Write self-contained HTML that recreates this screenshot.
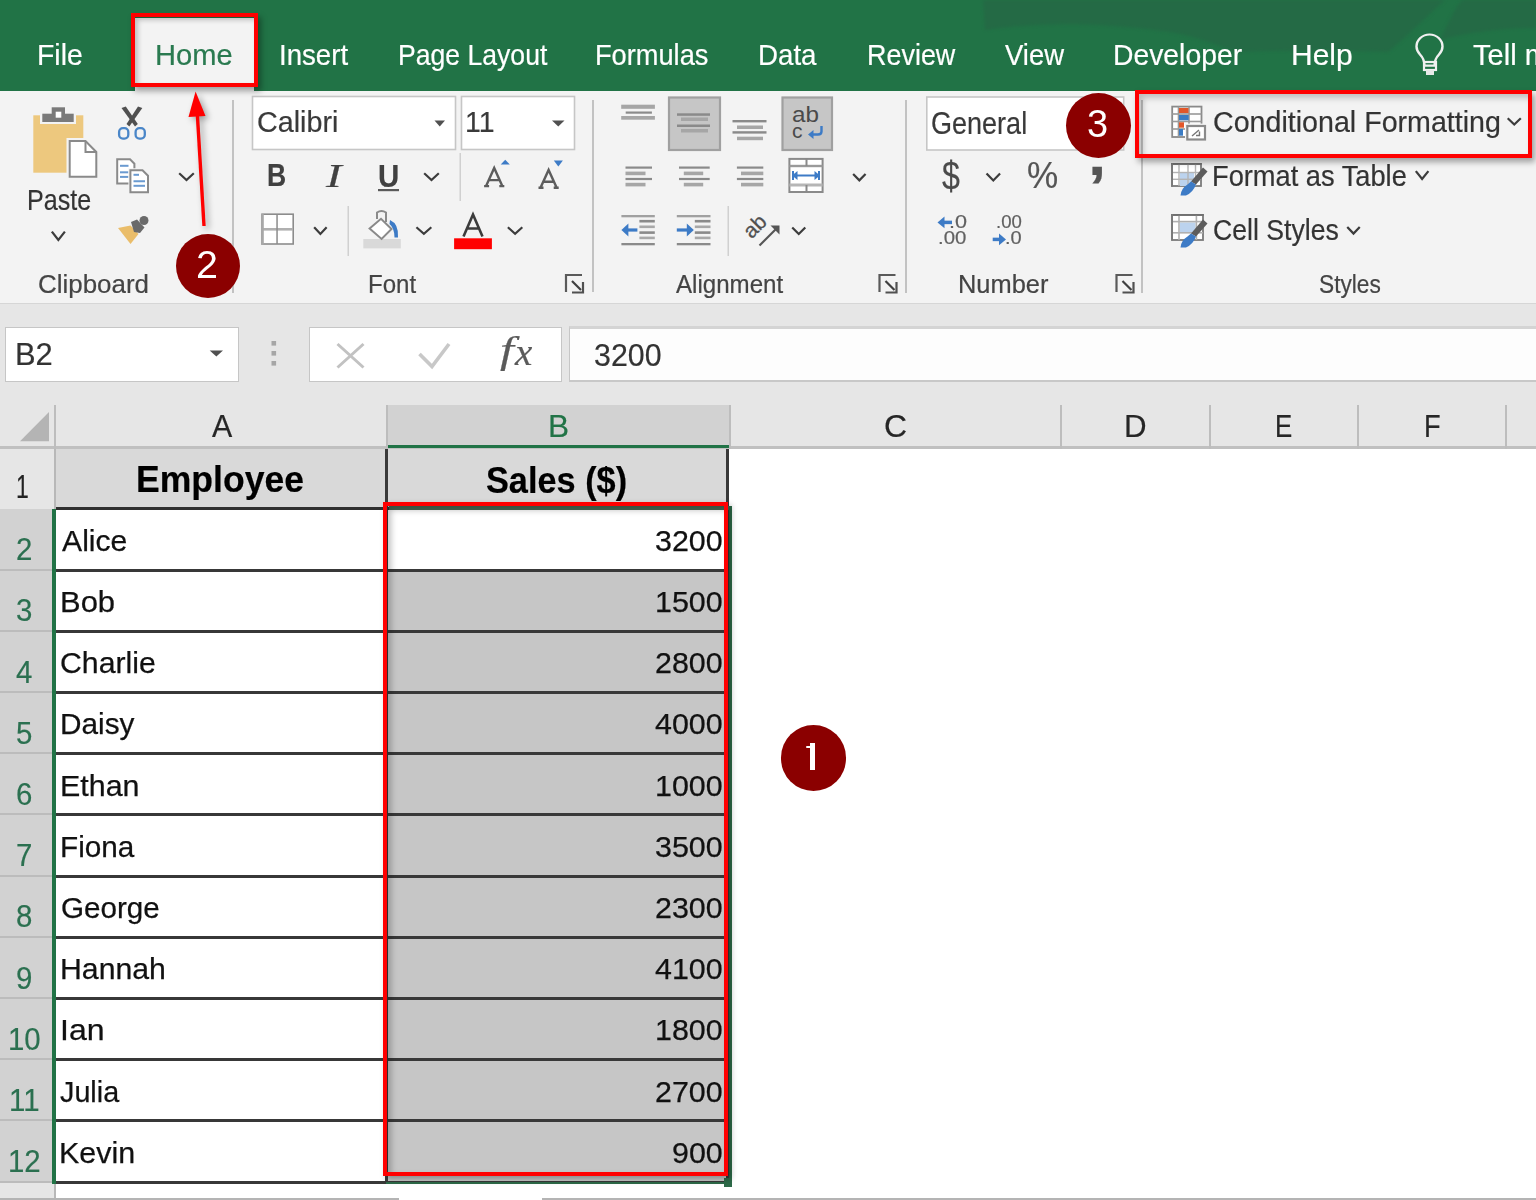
<!DOCTYPE html>
<html><head><meta charset="utf-8"><style>
html,body{margin:0;padding:0;}
body{width:1536px;height:1200px;overflow:hidden;position:relative;background:#fff;font-family:"Liberation Sans",sans-serif;}
.a{position:absolute;box-sizing:border-box;}
.t{position:absolute;white-space:nowrap;transform-origin:0 0;}
svg{position:absolute;left:0;top:0;}
</style></head><body>
<div class="a" style="left:0px;top:0px;width:1536px;height:91px;background:#217346;"></div>
<svg width="1536" height="91" style="filter:blur(1.5px)"><path d="M983,0 H1445 C1425,18 1405,38 1388,52 C1340,50 1290,50 1236,52 C1215,44 1195,36 1170,32 C1100,22 1040,22 985,30 Z" fill="#246a45"/><path d="M1462,0 H1536 V28 C1500,28 1465,33 1440,40 C1448,25 1452,12 1462,0 Z" fill="#246a45"/></svg>
<div class="a" style="left:0px;top:91px;width:1536px;height:212px;background:#f3f3f3;"></div>
<div class="a" style="left:0px;top:302.5px;width:1536px;height:2.0px;background:#d6d6d6;"></div>
<div class="a" style="left:0px;top:304px;width:1536px;height:100px;background:#e6e6e6;"></div>
<div class="a" style="left:5px;top:327px;width:234px;height:55px;background:#fff;border:1px solid #c6c6c6;"></div>
<div class="a" style="left:309px;top:327px;width:253px;height:55px;background:#fff;border:1px solid #c6c6c6;"></div>
<div class="a" style="left:569px;top:326px;width:967px;height:56px;background:#fdfdfd;border-top:3px solid #d4d4d4;border-bottom:2px solid #c8c8c8;border-left:1px solid #c6c6c6;"></div>
<div class="a" style="left:135px;top:18px;width:119px;height:73px;background:#f3f3f3;"></div>
<div class="a" style="left:0px;top:404px;width:1536px;height:45px;background:#e6e6e6;"></div>
<div class="a" style="left:386px;top:405px;width:343px;height:42px;background:#d2d2d2;"></div>
<div class="a" style="left:0px;top:446px;width:1536px;height:3px;background:#c0c0c0;"></div>
<div class="a" style="left:386px;top:445px;width:343px;height:3px;background:#217346;"></div>
<div class="a" style="left:54px;top:405px;width:2px;height:44px;background:#bdbdbd;"></div>
<div class="a" style="left:386px;top:405px;width:2px;height:44px;background:#bdbdbd;"></div>
<div class="a" style="left:729px;top:405px;width:2px;height:44px;background:#bdbdbd;"></div>
<div class="a" style="left:1060px;top:405px;width:2px;height:44px;background:#bdbdbd;"></div>
<div class="a" style="left:1209px;top:405px;width:2px;height:44px;background:#bdbdbd;"></div>
<div class="a" style="left:1357px;top:405px;width:2px;height:44px;background:#bdbdbd;"></div>
<div class="a" style="left:1505px;top:405px;width:2px;height:44px;background:#bdbdbd;"></div>
<div class="a" style="left:0px;top:449px;width:54px;height:60px;background:#e6e6e6;"></div>
<div class="a" style="left:0px;top:509px;width:52px;height:673px;background:#d2d2d2;"></div>
<div class="a" style="left:0px;top:1182px;width:54px;height:18px;background:#e6e6e6;"></div>
<div class="a" style="left:54px;top:449px;width:2px;height:751px;background:#b8b8b8;"></div>
<div class="a" style="left:0px;top:569px;width:52px;height:2px;background:#bcbcbc;"></div>
<div class="a" style="left:0px;top:630px;width:52px;height:2px;background:#bcbcbc;"></div>
<div class="a" style="left:0px;top:691px;width:52px;height:2px;background:#bcbcbc;"></div>
<div class="a" style="left:0px;top:752px;width:52px;height:2px;background:#bcbcbc;"></div>
<div class="a" style="left:0px;top:813px;width:52px;height:2px;background:#bcbcbc;"></div>
<div class="a" style="left:0px;top:875px;width:52px;height:2px;background:#bcbcbc;"></div>
<div class="a" style="left:0px;top:936px;width:52px;height:2px;background:#bcbcbc;"></div>
<div class="a" style="left:0px;top:997px;width:52px;height:2px;background:#bcbcbc;"></div>
<div class="a" style="left:0px;top:1058px;width:52px;height:2px;background:#bcbcbc;"></div>
<div class="a" style="left:0px;top:1119px;width:52px;height:2px;background:#bcbcbc;"></div>
<div class="a" style="left:0px;top:1181px;width:52px;height:2px;background:#bcbcbc;"></div>
<div class="a" style="left:52px;top:509px;width:4px;height:675px;background:#217346;"></div>
<div class="a" style="left:0px;top:1198px;width:399px;height:2px;background:#b4b4b4;"></div>
<div class="a" style="left:542px;top:1198px;width:994px;height:2px;background:#b4b4b4;"></div>
<div class="a" style="left:56px;top:449px;width:330px;height:60px;background:#d9d9d9;"></div>
<div class="a" style="left:386px;top:449px;width:343px;height:60px;background:#d9d9d9;"></div>
<div class="a" style="left:56px;top:509px;width:330px;height:672px;background:#fff;"></div>
<div class="a" style="left:386px;top:509px;width:342px;height:62px;background:#fff;"></div>
<div class="a" style="left:386px;top:571px;width:342px;height:610px;background:#c6c6c6;"></div>
<div class="a" style="left:56px;top:507px;width:673px;height:3px;background:#303030;"></div>
<div class="a" style="left:56px;top:569px;width:672px;height:3px;background:#383838;"></div>
<div class="a" style="left:56px;top:630px;width:672px;height:3px;background:#383838;"></div>
<div class="a" style="left:56px;top:691px;width:672px;height:3px;background:#383838;"></div>
<div class="a" style="left:56px;top:752px;width:672px;height:3px;background:#383838;"></div>
<div class="a" style="left:56px;top:813px;width:672px;height:3px;background:#383838;"></div>
<div class="a" style="left:56px;top:875px;width:672px;height:3px;background:#383838;"></div>
<div class="a" style="left:56px;top:936px;width:672px;height:3px;background:#383838;"></div>
<div class="a" style="left:56px;top:997px;width:672px;height:3px;background:#383838;"></div>
<div class="a" style="left:56px;top:1058px;width:672px;height:3px;background:#383838;"></div>
<div class="a" style="left:56px;top:1119px;width:672px;height:3px;background:#383838;"></div>
<div class="a" style="left:56px;top:1181px;width:672px;height:3px;background:#383838;"></div>
<div class="a" style="left:385px;top:449px;width:3px;height:732px;background:#3a3a3a;"></div>
<div class="a" style="left:726px;top:449px;width:3px;height:732px;background:#383838;"></div>
<div class="a" style="left:729px;top:506px;width:2.7000000000000455px;height:678px;background:#2d6a48;"></div>
<div class="a" style="left:386px;top:1181.5px;width:345.70000000000005px;height:2.7000000000000455px;background:#2d6a48;"></div>
<div class="a" style="left:389px;top:505.5px;width:340px;height:4.5px;background:#4a6b56;"></div>
<div class="a" style="left:723.5px;top:1178px;width:8.5px;height:8.5px;background:#2d6a48;"></div>
<svg width="1536" height="1200"><rect x="232" y="100" width="2" height="193" fill="#c2c2c2" stroke="none" stroke-width="0" /><rect x="592" y="100" width="2" height="192" fill="#c2c2c2" stroke="none" stroke-width="0" /><rect x="905" y="100" width="2" height="193" fill="#c2c2c2" stroke="none" stroke-width="0" /><rect x="1141" y="100" width="2" height="193" fill="#c2c2c2" stroke="none" stroke-width="0" /><rect x="459.5" y="153" width="1.5" height="48" fill="#d0d0d0" stroke="none" stroke-width="0" /><rect x="347.5" y="206" width="1.5" height="50" fill="#d0d0d0" stroke="none" stroke-width="0" /><rect x="727.5" y="206" width="1.5" height="50" fill="#d0d0d0" stroke="none" stroke-width="0" /><path d="M566,292 V275 H582" fill="none" stroke="#5a5a5a" stroke-width="2.2"/><path d="M572,281 L581,290" stroke="#404040" stroke-width="2.2"/><path d="M572,292.5 H583 V282" fill="none" stroke="#505050" stroke-width="2.2"/><path d="M879.5,292 V275 H895.5" fill="none" stroke="#5a5a5a" stroke-width="2.2"/><path d="M885.5,281 L894.5,290" stroke="#404040" stroke-width="2.2"/><path d="M885.5,292.5 H896.5 V282" fill="none" stroke="#505050" stroke-width="2.2"/><path d="M1116.5,292 V275 H1132.5" fill="none" stroke="#5a5a5a" stroke-width="2.2"/><path d="M1122.5,281 L1131.5,290" stroke="#404040" stroke-width="2.2"/><path d="M1122.5,292.5 H1133.5 V282" fill="none" stroke="#505050" stroke-width="2.2"/><rect x="33.3" y="115.3" width="50.0" height="57.39999999999999" fill="#edc87e" stroke="none" stroke-width="0" /><path d="M40,112 H76 V124 H40 Z" fill="#f3f3f3"/><rect x="42.3" y="113.7" width="31.400000000000006" height="8.299999999999997" fill="#7a7a7a" stroke="none" stroke-width="0" /><rect x="51.7" y="107.3" width="13.299999999999997" height="6.700000000000003" fill="#7a7a7a" stroke="none" stroke-width="0" /><rect x="55.7" y="111.7" width="5.599999999999994" height="6.0" fill="#ffffff" stroke="none" stroke-width="0" /><path d="M66.5,138 H87 L99.5,150.5 V180 H66.5 Z" fill="#f3f3f3"/><path d="M69.7,141 H85.5 L96.3,152 V176.7 H69.7 Z" fill="#fff" stroke="#8a8a8a" stroke-width="2"/><path d="M85.5,141 V152 H96.3" fill="none" stroke="#8a8a8a" stroke-width="2"/><polyline points="52.5,232.5 58.35,240 64.2,232.5" fill="none" stroke="#3c3c3c" stroke-width="2.2" stroke-linecap="square"/><polygon points="121.5,108 125.8,106.5 137.8,124 135,126.5" fill="#505050"/><polygon points="138,106.5 142.3,108 129.3,126.5 126.5,124" fill="#505050"/><rect x="119.1" y="128.2" width="9.2" height="10.4" rx="3.8" fill="none" stroke="#4a86c8" stroke-width="2.3"/><rect x="135.6" y="128.2" width="9.2" height="10.4" rx="3.8" fill="none" stroke="#4a86c8" stroke-width="2.3"/><path d="M117.2,159.3 H130 L134.4,163.7 V183.6 H117.2 Z" fill="#fff" stroke="#8a8a8a" stroke-width="2"/><rect x="120" y="164.8" width="8.5" height="2.0" fill="#6a9ad0" stroke="none" stroke-width="0" /><rect x="120" y="171.3" width="8.5" height="2.0" fill="#6a9ad0" stroke="none" stroke-width="0" /><rect x="120" y="175.9" width="8.5" height="2.0" fill="#6a9ad0" stroke="none" stroke-width="0" /><path d="M128.4,168.2 H143 L148,173.2 V192.3 H128.4 Z" fill="#f3f3f3"/><path d="M130.4,170.2 H142.5 L148,175.7 V192.3 H130.4 Z" fill="#fff" stroke="#8a8a8a" stroke-width="2"/><rect x="133.5" y="173.8" width="5.5" height="2.0" fill="#6a9ad0" stroke="none" stroke-width="0" /><rect x="133.5" y="180.25" width="11.5" height="2.0" fill="#6a9ad0" stroke="none" stroke-width="0" /><rect x="133.5" y="184.8" width="11.5" height="2.0" fill="#6a9ad0" stroke="none" stroke-width="0" /><polyline points="180,174 186.5,180 193,174" fill="none" stroke="#3c3c3c" stroke-width="2.2" stroke-linecap="square"/><polygon points="118,228 130.5,225.5 138.5,234 130.5,244" fill="#eabd6a"/><polygon points="131,222 137,219.5 144.5,227.5 140,233 134,232" fill="#6a6a6a"/><circle cx="144" cy="220.5" r="4.5" fill="#6a6a6a"/><rect x="252.5" y="96.5" width="203.0" height="53.0" fill="#fff" stroke="#c6c6c6" stroke-width="1.6" /><rect x="461.5" y="96.5" width="113.0" height="53.0" fill="#fff" stroke="#c6c6c6" stroke-width="1.6" /><polygon points="434.5,120.5 445,120.5 439.75,126.5" fill="#505050"/><polygon points="552,120.5 564.5,120.5 558.25,126.5" fill="#505050"/><polygon points="209.7,350.5 223,350.5 216.35,356.5" fill="#505050"/><polyline points="425,174 431.5,180 438,174" fill="none" stroke="#3c3c3c" stroke-width="2.2" stroke-linecap="square"/><polyline points="314.9,228 320.4,233.9 325.9,228" fill="none" stroke="#3c3c3c" stroke-width="2.2" stroke-linecap="square"/><polyline points="417.25,228 423.875,233.8 430.5,228" fill="none" stroke="#3c3c3c" stroke-width="2.2" stroke-linecap="square"/><polyline points="508.7,228 515.1,233.8 521.5,228" fill="none" stroke="#3c3c3c" stroke-width="2.2" stroke-linecap="square"/><rect x="378" y="189" width="21" height="2.1999999999999886" fill="#5a5a5a" stroke="none" stroke-width="0" /><path d="M486.1,186.1 L494.20000000000005,168 L502.3,186.1 M489.6,180.1 H498.8 M484.1,186.1 H489.1 M499.3,186.1 H504.3" fill="none" stroke="#5c5c5c" stroke-width="2.4"/><polygon points="500.7,164.6 509.8,164.6 505.25,159.8" fill="#3d7bc6"/><path d="M540.5,187.7 L548.6,169.9 L556.7,187.7 M544.0,181.7 H553.2 M538.5,187.7 H543.5 M553.7,187.7 H558.7" fill="none" stroke="#5c5c5c" stroke-width="2.4"/><polygon points="553.8,160.4 562.9,160.4 558.35,166.6" fill="#3d7bc6"/><rect x="262" y="214.2" width="31.19999999999999" height="29.80000000000001" fill="#fff" stroke="#8c8c8c" stroke-width="1.6" /><rect x="262.5" y="228" width="30.5" height="2.5999999999999943" fill="#b0b0b0" stroke="none" stroke-width="0" /><rect x="276.3" y="214.2" width="1.5" height="29.80000000000001" fill="#8c8c8c" stroke="none" stroke-width="0" /><rect x="261.3" y="214" width="2.5" height="30.80000000000001" fill="#a8a8a8" stroke="none" stroke-width="0" /><rect x="363.3" y="239" width="37.5" height="9.400000000000006" fill="#d9d9d9" stroke="none" stroke-width="0" /><path d="M369.6,228.6 L381.6,239 L391.5,229 L381,218.75 Z" fill="#fff" stroke="#8a8a8a" stroke-width="2"/><path d="M377,219 V212.5 Q381.5,209.5 386,212.5 V222" fill="none" stroke="#8a8a8a" stroke-width="2"/><path d="M390,220 Q399,224 398,237.5 L394.5,237.5 Q394.5,228 389.5,224 Z" fill="#3d7bc6"/><path d="M463.5,236.5 L473,214.5 L482.5,236.5 M467,228.5 H479" fill="none" stroke="#3c3c3c" stroke-width="2.6"/><rect x="454.1" y="238.3" width="37.799999999999955" height="10.899999999999977" fill="#ff0000" stroke="none" stroke-width="0" /><rect x="621.2" y="104.7" width="33.69999999999993" height="4.099999999999994" fill="#a6a6a6" stroke="none" stroke-width="0" /><rect x="625.7" y="111.5" width="26.199999999999932" height="2.200000000000003" fill="#8a8a8a" stroke="none" stroke-width="0" /><rect x="621.2" y="116" width="33.69999999999993" height="3.700000000000003" fill="#a6a6a6" stroke="none" stroke-width="0" /><rect x="669" y="97.5" width="51" height="52.5" fill="#c6c6c6" stroke="#a0a0a0" stroke-width="2.2" /><rect x="677" y="113.3" width="33" height="2.5" fill="#8a8a8a" stroke="none" stroke-width="0" /><rect x="681" y="117.5" width="27" height="3.5" fill="#a6a6a6" stroke="none" stroke-width="0" /><rect x="677" y="124.5" width="33" height="2.5" fill="#8a8a8a" stroke="none" stroke-width="0" /><rect x="681" y="129" width="27" height="3.5" fill="#a6a6a6" stroke="none" stroke-width="0" /><rect x="732.5" y="120" width="34.0" height="2.4000000000000057" fill="#8a8a8a" stroke="none" stroke-width="0" /><rect x="737" y="125.5" width="26" height="3.5" fill="#a6a6a6" stroke="none" stroke-width="0" /><rect x="732.5" y="131.2" width="34.0" height="2.4000000000000057" fill="#8a8a8a" stroke="none" stroke-width="0" /><rect x="737" y="136.7" width="26" height="3.5" fill="#a6a6a6" stroke="none" stroke-width="0" /><rect x="782.5" y="97.5" width="49.5" height="52.5" fill="#c6c6c6" stroke="#a0a0a0" stroke-width="2.2" /><text x="792" y="122" font-family="Liberation Sans" font-size="22" fill="#4a4a4a" textLength="27" lengthAdjust="spacingAndGlyphs">ab</text><text x="792" y="137.7" font-family="Liberation Sans" font-size="21" fill="#4a4a4a">c</text><path d="M821.5,126 V131.5 Q821.5,134.5 818,134.5 H810" fill="none" stroke="#3d7bc6" stroke-width="2.4"/><polygon points="808,134.5 813.5,130 813.5,139" fill="#3d7bc6"/><rect x="625.5" y="166.5" width="26.5" height="2.1999999999999886" fill="#8a8a8a" stroke="none" stroke-width="0" /><rect x="625.5" y="171.6" width="20.0" height="3.5999999999999943" fill="#a6a6a6" stroke="none" stroke-width="0" /><rect x="625.5" y="177.9" width="26.5" height="2.1999999999999886" fill="#8a8a8a" stroke="none" stroke-width="0" /><rect x="625.5" y="182.8" width="20.0" height="3.5999999999999943" fill="#a6a6a6" stroke="none" stroke-width="0" /><rect x="679" y="166.5" width="30.700000000000045" height="2.1999999999999886" fill="#8a8a8a" stroke="none" stroke-width="0" /><rect x="683.8" y="171.6" width="19.40000000000009" height="3.5999999999999943" fill="#a6a6a6" stroke="none" stroke-width="0" /><rect x="679" y="177.9" width="30.700000000000045" height="2.1999999999999886" fill="#8a8a8a" stroke="none" stroke-width="0" /><rect x="683.8" y="182.8" width="19.40000000000009" height="3.5999999999999943" fill="#a6a6a6" stroke="none" stroke-width="0" /><rect x="736.9" y="166.5" width="26.399999999999977" height="2.1999999999999886" fill="#8a8a8a" stroke="none" stroke-width="0" /><rect x="741" y="171.6" width="22.299999999999955" height="3.5999999999999943" fill="#a6a6a6" stroke="none" stroke-width="0" /><rect x="736.9" y="177.9" width="26.399999999999977" height="2.1999999999999886" fill="#8a8a8a" stroke="none" stroke-width="0" /><rect x="741" y="182.8" width="22.299999999999955" height="3.5999999999999943" fill="#a6a6a6" stroke="none" stroke-width="0" /><rect x="789.4" y="158.9" width="33.200000000000045" height="33.099999999999994" fill="#fff" stroke="#8a8a8a" stroke-width="2" /><rect x="789.4" y="164.8" width="33.200000000000045" height="2.3999999999999773" fill="#9a9a9a" stroke="none" stroke-width="0" /><rect x="789.4" y="183.5" width="33.200000000000045" height="3.0" fill="#b6b6b6" stroke="none" stroke-width="0" /><rect x="805.5" y="158.9" width="2.0" height="7.099999999999994" fill="#8a8a8a" stroke="none" stroke-width="0" /><rect x="805.5" y="185" width="2.0" height="7" fill="#8a8a8a" stroke="none" stroke-width="0" /><path d="M795,175.5 H817" stroke="#3d7bc6" stroke-width="2"/><polygon points="792,175.5 797.5,171 797.5,180" fill="#3d7bc6"/><polygon points="820,175.5 814.5,171 814.5,180" fill="#3d7bc6"/><rect x="792" y="171" width="2" height="9" fill="#3d7bc6" stroke="none" stroke-width="0" /><rect x="818" y="171" width="2" height="9" fill="#3d7bc6" stroke="none" stroke-width="0" /><polyline points="853.9,174.7 859.3499999999999,180.3 864.8,174.7" fill="none" stroke="#3c3c3c" stroke-width="2.2" stroke-linecap="square"/><rect x="621.4" y="215" width="33.39999999999998" height="2.3000000000000114" fill="#a0a0a0" stroke="none" stroke-width="0" /><rect x="621.4" y="243" width="33.39999999999998" height="2.3000000000000114" fill="#8a8a8a" stroke="none" stroke-width="0" /><rect x="639.4" y="219.89999999999998" width="15.399999999999977" height="2.6000000000000227" fill="#8a8a8a" stroke="none" stroke-width="0" /><rect x="639.4" y="225.5" width="15.399999999999977" height="2.6000000000000227" fill="#a8a8a8" stroke="none" stroke-width="0" /><rect x="639.4" y="231.29999999999998" width="15.399999999999977" height="2.6000000000000227" fill="#8a8a8a" stroke="none" stroke-width="0" /><rect x="639.4" y="236.6" width="15.399999999999977" height="2.6000000000000227" fill="#a8a8a8" stroke="none" stroke-width="0" /><path d="M625.4,230 H637.4" stroke="#3d7bc6" stroke-width="3.2"/><polygon points="621.4,230 628.4,223.5 628.4,236.5" fill="#3d7bc6"/><rect x="676.8" y="215" width="33.700000000000045" height="2.3000000000000114" fill="#a0a0a0" stroke="none" stroke-width="0" /><rect x="676.8" y="243" width="33.700000000000045" height="2.3000000000000114" fill="#8a8a8a" stroke="none" stroke-width="0" /><rect x="694.8" y="219.89999999999998" width="15.700000000000045" height="2.6000000000000227" fill="#8a8a8a" stroke="none" stroke-width="0" /><rect x="694.8" y="225.5" width="15.700000000000045" height="2.6000000000000227" fill="#a8a8a8" stroke="none" stroke-width="0" /><rect x="694.8" y="231.29999999999998" width="15.700000000000045" height="2.6000000000000227" fill="#8a8a8a" stroke="none" stroke-width="0" /><rect x="694.8" y="236.6" width="15.700000000000045" height="2.6000000000000227" fill="#a8a8a8" stroke="none" stroke-width="0" /><path d="M676.8,230 H688.8" stroke="#3d7bc6" stroke-width="3.2"/><polygon points="693.8,230 686.8,223.5 686.8,236.5" fill="#3d7bc6"/><text x="0" y="0" font-family="Liberation Sans" font-size="21" fill="#505050" stroke="#505050" stroke-width="0.3" transform="translate(751.5,239.5) rotate(-45)">ab</text><path d="M759.5,245.5 L776,229" stroke="#555" stroke-width="2.2"/><polygon points="779.5,225.5 779.5,234.5 770.5,225.5" fill="#555"/><polyline points="793,228.3 798.75,234 804.5,228.3" fill="none" stroke="#3c3c3c" stroke-width="2.2" stroke-linecap="square"/><rect x="926.8" y="97" width="196.9000000000001" height="53" fill="#fff" stroke="#c6c6c6" stroke-width="1.6" /><polyline points="987.3,174.2 993.3,180.4 999.3,174.2" fill="none" stroke="#3c3c3c" stroke-width="2.2" stroke-linecap="square"/><path d="M944,222.4 H952" stroke="#3d7bc6" stroke-width="3.5"/><polygon points="937.5,222.4 944.5,216.5 944.5,228.3" fill="#3d7bc6"/><path d="M1000,239.4 H1000" stroke="#3d7bc6" stroke-width="3.5"/><path d="M992.7,239.4 H1000" stroke="#3d7bc6" stroke-width="3.5"/><polygon points="1006,239.4 999,233.5 999,245.3" fill="#3d7bc6"/><rect x="1172.2" y="106.6" width="29.299999999999955" height="30.400000000000006" fill="#fff" stroke="#8a8a8a" stroke-width="1.8" /><rect x="1177.7" y="106.6" width="1.599999999999909" height="30.400000000000006" fill="#9a9a9a" stroke="none" stroke-width="0" /><rect x="1188.2" y="106.6" width="1.599999999999909" height="30.400000000000006" fill="#9a9a9a" stroke="none" stroke-width="0" /><rect x="1172.2" y="113.2" width="29.299999999999955" height="1.5999999999999943" fill="#9a9a9a" stroke="none" stroke-width="0" /><rect x="1172.2" y="120.7" width="29.299999999999955" height="1.5999999999999943" fill="#9a9a9a" stroke="none" stroke-width="0" /><rect x="1172.2" y="128.2" width="29.299999999999955" height="1.6000000000000227" fill="#9a9a9a" stroke="none" stroke-width="0" /><rect x="1179" y="108" width="9.5" height="5" fill="#e2572a" stroke="none" stroke-width="0" /><rect x="1179" y="115" width="9.700000000000045" height="5.299999999999997" fill="#3b7cc4" stroke="none" stroke-width="0" /><rect x="1179" y="122.3" width="5" height="5.400000000000006" fill="#e2572a" stroke="none" stroke-width="0" /><rect x="1179" y="129" width="4" height="6.699999999999989" fill="#3b7cc4" stroke="none" stroke-width="0" /><rect x="1185" y="123.6" width="22" height="17.599999999999994" fill="#f3f3f3" stroke="none" stroke-width="0" /><rect x="1187.3" y="126" width="17.700000000000045" height="13.5" fill="#fff" stroke="#8a8a8a" stroke-width="2.2" /><path d="M1192,136 L1199,130 M1196,135.5 H1199.5 V131.5" stroke="#777" stroke-width="1.4" fill="none"/><rect x="1172" y="164" width="29" height="22" fill="#fff" stroke="#7a7a7a" stroke-width="1.8" /><rect x="1180" y="173" width="14" height="13" fill="#bcd3ee" stroke="none" stroke-width="0" /><rect x="1178.3" y="164" width="1.400000000000091" height="22" fill="#b4b4b4" stroke="none" stroke-width="0" /><rect x="1187.3" y="164" width="1.400000000000091" height="22" fill="#b4b4b4" stroke="none" stroke-width="0" /><rect x="1194.8" y="164" width="1.400000000000091" height="22" fill="#b4b4b4" stroke="none" stroke-width="0" /><rect x="1172" y="171.8" width="29" height="1.3999999999999773" fill="#b4b4b4" stroke="none" stroke-width="0" /><rect x="1172" y="178.60000000000002" width="29" height="1.3999999999999773" fill="#b4b4b4" stroke="none" stroke-width="0" /><rect x="1171.2" y="163" width="30.59999999999991" height="1.8000000000000114" fill="#707070" stroke="none" stroke-width="0" /><rect x="1171.2" y="163" width="1.7999999999999545" height="23.80000000000001" fill="#7a7a7a" stroke="none" stroke-width="0" /><polygon points="1203,167.6 1207.5,171.6 1196,184.6 1191,181.6" fill="#5c5c5c"/><path d="M1180.5,195.6 Q1181,188.6 1187.5,184.6 L1191,181.6 L1196,184.6 Q1193,192.6 1186,195.6 Z" fill="#3d7bc6"/><rect x="1172" y="215" width="31" height="25" fill="#fff" stroke="#7a7a7a" stroke-width="1.8" /><rect x="1180" y="222.5" width="15.5" height="9.699999999999989" fill="#bcd3ee" stroke="none" stroke-width="0" /><rect x="1178.2" y="215" width="1.599999999999909" height="25" fill="#b0b0b0" stroke="none" stroke-width="0" /><rect x="1195.6000000000001" y="215" width="1.599999999999909" height="25" fill="#b0b0b0" stroke="none" stroke-width="0" /><rect x="1172" y="220.79999999999998" width="31" height="1.6000000000000227" fill="#b0b0b0" stroke="none" stroke-width="0" /><rect x="1172" y="232.0" width="31" height="1.6000000000000227" fill="#b0b0b0" stroke="none" stroke-width="0" /><rect x="1171.2" y="214" width="32.59999999999991" height="1.8000000000000114" fill="#707070" stroke="none" stroke-width="0" /><rect x="1171.2" y="214" width="1.7999999999999545" height="26.400000000000006" fill="#7a7a7a" stroke="none" stroke-width="0" /><polygon points="1203,219.5 1207.5,223.5 1196,236.5 1191,233.5" fill="#5c5c5c"/><path d="M1180.5,247.5 Q1181,240.5 1187.5,236.5 L1191,233.5 L1196,236.5 Q1193,244.5 1186,247.5 Z" fill="#3d7bc6"/><polyline points="1508.5,119 1514.25,124.5 1520,119" fill="none" stroke="#3c3c3c" stroke-width="2.2" stroke-linecap="square"/><polyline points="1416.5,172 1422.1,179 1427.7,172" fill="none" stroke="#3c3c3c" stroke-width="2.2" stroke-linecap="square"/><polyline points="1348,227.7 1353.5,233.6 1359,227.7" fill="none" stroke="#3c3c3c" stroke-width="2.2" stroke-linecap="square"/><path d="M337.5,344 L363.5,367.5 M363.5,344 L337.5,367.5" stroke="#c2c2c2" stroke-width="3"/><path d="M419.5,354 L432,366.5 L449,344" fill="none" stroke="#c8c8c8" stroke-width="3.6"/><rect x="271.5" y="341" width="4.6" height="4.6" fill="#a6a6a6"/><rect x="271.5" y="351" width="4.6" height="4.6" fill="#a6a6a6"/><rect x="271.5" y="361" width="4.6" height="4.6" fill="#a6a6a6"/><polygon points="20,441.2 49,412 49,441.2" fill="#b4b4b4"/><path d="M1424.5,62 Q1424.5,55 1420,50 Q1416.5,46 1416.5,41.5 A12.9,12.9 0 1 1 1442.5,41.5 Q1442.5,46 1439,50 Q1434.5,55 1434.5,62 Z" fill="none" stroke="#f0f0f0" stroke-width="2.4" transform="translate(0,8) scale(1,0.93)"/><rect x="1424" y="62" width="12" height="8" fill="none" stroke="#f0f0f0" stroke-width="2.2"/><rect x="1426" y="70" width="8" height="5" fill="#e8e8e8"/></svg>
<div class="t" style="left:37.47px;top:39.82px;font-size:29.51px;line-height:29.51px;font-family:'Liberation Sans';color:#ffffff;transform:scaleX(0.9631);-webkit-text-stroke:0.2px #ffffff;">File</div>
<div class="t" style="left:279.46px;top:39.82px;font-size:29.51px;line-height:29.51px;font-family:'Liberation Sans';color:#ffffff;transform:scaleX(0.9369);-webkit-text-stroke:0.2px #ffffff;">Insert</div>
<div class="t" style="left:397.82px;top:39.82px;font-size:29.51px;line-height:29.51px;font-family:'Liberation Sans';color:#ffffff;transform:scaleX(0.9014);-webkit-text-stroke:0.2px #ffffff;">Page Layout</div>
<div class="t" style="left:595.37px;top:39.82px;font-size:29.51px;line-height:29.51px;font-family:'Liberation Sans';color:#ffffff;transform:scaleX(0.9222);-webkit-text-stroke:0.2px #ffffff;">Formulas</div>
<div class="t" style="left:757.53px;top:39.82px;font-size:29.51px;line-height:29.51px;font-family:'Liberation Sans';color:#ffffff;transform:scaleX(0.9383);-webkit-text-stroke:0.2px #ffffff;">Data</div>
<div class="t" style="left:866.59px;top:39.82px;font-size:29.51px;line-height:29.51px;font-family:'Liberation Sans';color:#ffffff;transform:scaleX(0.9130);-webkit-text-stroke:0.2px #ffffff;">Review</div>
<div class="t" style="left:1005.29px;top:39.82px;font-size:29.51px;line-height:29.51px;font-family:'Liberation Sans';color:#ffffff;transform:scaleX(0.9309);-webkit-text-stroke:0.2px #ffffff;">View</div>
<div class="t" style="left:1113.38px;top:39.82px;font-size:29.51px;line-height:29.51px;font-family:'Liberation Sans';color:#ffffff;transform:scaleX(0.9598);-webkit-text-stroke:0.2px #ffffff;">Developer</div>
<div class="t" style="left:1290.54px;top:39.82px;font-size:29.51px;line-height:29.51px;font-family:'Liberation Sans';color:#ffffff;transform:scaleX(1.0169);-webkit-text-stroke:0.2px #ffffff;">Help</div>
<div class="t" style="left:154.61px;top:39.82px;font-size:29.51px;line-height:29.51px;font-family:'Liberation Sans';color:#2a7a50;transform:scaleX(0.9870);-webkit-text-stroke:0.2px #2a7a50;">Home</div>
<div class="t" style="left:1473.36px;top:39.90px;font-size:29.65px;line-height:29.65px;font-family:'Liberation Sans';color:#ffffff;transform:scaleX(0.9800);-webkit-text-stroke:0.2px #ffffff;">Tell me what you want to do</div>
<div class="t" style="left:37.68px;top:272.01px;font-size:25.15px;line-height:25.15px;font-family:'Liberation Sans';color:#444;transform:scaleX(1.0312);-webkit-text-stroke:0.2px #444;">Clipboard</div>
<div class="t" style="left:368.03px;top:272.01px;font-size:25.15px;line-height:25.15px;font-family:'Liberation Sans';color:#444;transform:scaleX(0.9568);-webkit-text-stroke:0.2px #444;">Font</div>
<div class="t" style="left:675.95px;top:272.01px;font-size:25.15px;line-height:25.15px;font-family:'Liberation Sans';color:#444;transform:scaleX(0.9588);-webkit-text-stroke:0.2px #444;">Alignment</div>
<div class="t" style="left:957.91px;top:272.01px;font-size:25.15px;line-height:25.15px;font-family:'Liberation Sans';color:#444;transform:scaleX(1.0118);-webkit-text-stroke:0.2px #444;">Number</div>
<div class="t" style="left:1318.98px;top:272.01px;font-size:25.15px;line-height:25.15px;font-family:'Liberation Sans';color:#444;transform:scaleX(0.9032);-webkit-text-stroke:0.2px #444;">Styles</div>
<div class="t" style="left:26.94px;top:186.39px;font-size:29.07px;line-height:29.07px;font-family:'Liberation Sans';color:#333;transform:scaleX(0.8632);-webkit-text-stroke:0.2px #333;">Paste</div>
<div class="t" style="left:256.54px;top:108.39px;font-size:29.07px;line-height:29.07px;font-family:'Liberation Sans';color:#3a3a3a;transform:scaleX(0.9879);-webkit-text-stroke:0.2px #3a3a3a;">Calibri</div>
<div class="t" style="left:464.84px;top:108.39px;font-size:29.07px;line-height:29.07px;font-family:'Liberation Sans';color:#3a3a3a;transform:scaleX(0.9796);-webkit-text-stroke:0.2px #3a3a3a;">11</div>
<div class="t" style="left:930.65px;top:108.16px;font-size:30.52px;line-height:30.52px;font-family:'Liberation Sans';color:#3a3a3a;transform:scaleX(0.8857);-webkit-text-stroke:0.2px #3a3a3a;">General</div>
<div class="t" style="left:1212.54px;top:108.39px;font-size:29.07px;line-height:29.07px;font-family:'Liberation Sans';color:#333;transform:scaleX(0.9848);-webkit-text-stroke:0.2px #333;">Conditional Formatting</div>
<div class="t" style="left:1212.37px;top:162.39px;font-size:29.07px;line-height:29.07px;font-family:'Liberation Sans';color:#333;transform:scaleX(0.9372);-webkit-text-stroke:0.2px #333;">Format as Table</div>
<div class="t" style="left:1212.64px;top:216.39px;font-size:29.07px;line-height:29.07px;font-family:'Liberation Sans';color:#333;transform:scaleX(0.9162);-webkit-text-stroke:0.2px #333;">Cell Styles</div>
<div class="t" style="left:14.77px;top:339.02px;font-size:31.40px;line-height:31.40px;font-family:'Liberation Sans';color:#333;transform:scaleX(0.9839);-webkit-text-stroke:0.2px #333;">B2</div>
<div class="t" style="left:593.65px;top:338.93px;font-size:31.98px;line-height:31.98px;font-family:'Liberation Sans';color:#333;transform:scaleX(0.9497);-webkit-text-stroke:0.2px #333;">3200</div>
<div class="t" style="left:212.34px;top:411.48px;font-size:31.69px;line-height:31.69px;font-family:'Liberation Sans';color:#262626;transform:scaleX(0.9568);-webkit-text-stroke:0.2px #262626;">A</div>
<div class="t" style="left:548.21px;top:411.48px;font-size:31.69px;line-height:31.69px;font-family:'Liberation Sans';color:#217346;transform:scaleX(0.9966);-webkit-text-stroke:0.2px #217346;">B</div>
<div class="t" style="left:884.17px;top:411.48px;font-size:31.69px;line-height:31.69px;font-family:'Liberation Sans';color:#262626;transform:scaleX(1.0071);-webkit-text-stroke:0.2px #262626;">C</div>
<div class="t" style="left:1123.94px;top:411.48px;font-size:31.69px;line-height:31.69px;font-family:'Liberation Sans';color:#262626;transform:scaleX(0.9862);-webkit-text-stroke:0.2px #262626;">D</div>
<div class="t" style="left:1274.88px;top:411.48px;font-size:31.69px;line-height:31.69px;font-family:'Liberation Sans';color:#262626;transform:scaleX(0.8152);-webkit-text-stroke:0.2px #262626;">E</div>
<div class="t" style="left:1424.47px;top:411.48px;font-size:31.69px;line-height:31.69px;font-family:'Liberation Sans';color:#262626;transform:scaleX(0.8584);-webkit-text-stroke:0.2px #262626;">F</div>
<div class="t" style="left:136.32px;top:461.43px;font-size:37.65px;line-height:37.65px;font-family:'Liberation Sans';font-weight:bold;color:#000;transform:scaleX(0.9452);-webkit-text-stroke:0.2px #000;">Employee</div>
<div class="t" style="left:485.81px;top:461.63px;font-size:37.06px;line-height:37.06px;font-family:'Liberation Sans';font-weight:bold;color:#000;transform:scaleX(0.9257);-webkit-text-stroke:0.2px #000;">Sales ($)</div>
<div class="t" style="left:61.94px;top:525.78px;font-size:29.80px;line-height:29.80px;font-family:'Liberation Sans';color:#111;transform:scaleX(1.0127);-webkit-text-stroke:0.25px #111;">Alice</div>
<div class="t" style="left:655.24px;top:525.78px;font-size:29.80px;line-height:29.80px;font-family:'Liberation Sans';color:#111;transform:scaleX(1.0207);-webkit-text-stroke:0.25px #111;">3200</div>
<div class="t" style="left:59.96px;top:586.98px;font-size:29.80px;line-height:29.80px;font-family:'Liberation Sans';color:#111;transform:scaleX(1.0383);-webkit-text-stroke:0.25px #111;">Bob</div>
<div class="t" style="left:655.24px;top:586.98px;font-size:29.80px;line-height:29.80px;font-family:'Liberation Sans';color:#111;transform:scaleX(1.0207);-webkit-text-stroke:0.25px #111;">1500</div>
<div class="t" style="left:60.46px;top:648.18px;font-size:29.80px;line-height:29.80px;font-family:'Liberation Sans';color:#111;transform:scaleX(1.0157);-webkit-text-stroke:0.25px #111;">Charlie</div>
<div class="t" style="left:655.24px;top:648.18px;font-size:29.80px;line-height:29.80px;font-family:'Liberation Sans';color:#111;transform:scaleX(1.0207);-webkit-text-stroke:0.25px #111;">2800</div>
<div class="t" style="left:59.56px;top:709.38px;font-size:29.80px;line-height:29.80px;font-family:'Liberation Sans';color:#111;transform:scaleX(0.9984);-webkit-text-stroke:0.25px #111;">Daisy</div>
<div class="t" style="left:655.24px;top:709.38px;font-size:29.80px;line-height:29.80px;font-family:'Liberation Sans';color:#111;transform:scaleX(1.0207);-webkit-text-stroke:0.25px #111;">4000</div>
<div class="t" style="left:60.01px;top:770.58px;font-size:29.80px;line-height:29.80px;font-family:'Liberation Sans';color:#111;transform:scaleX(1.0207);-webkit-text-stroke:0.25px #111;">Ethan</div>
<div class="t" style="left:655.24px;top:770.58px;font-size:29.80px;line-height:29.80px;font-family:'Liberation Sans';color:#111;transform:scaleX(1.0207);-webkit-text-stroke:0.25px #111;">1000</div>
<div class="t" style="left:60.06px;top:831.78px;font-size:29.80px;line-height:29.80px;font-family:'Liberation Sans';color:#111;transform:scaleX(0.9975);-webkit-text-stroke:0.25px #111;">Fiona</div>
<div class="t" style="left:655.24px;top:831.78px;font-size:29.80px;line-height:29.80px;font-family:'Liberation Sans';color:#111;transform:scaleX(1.0207);-webkit-text-stroke:0.25px #111;">3500</div>
<div class="t" style="left:60.52px;top:892.98px;font-size:29.80px;line-height:29.80px;font-family:'Liberation Sans';color:#111;transform:scaleX(0.9941);-webkit-text-stroke:0.25px #111;">George</div>
<div class="t" style="left:655.24px;top:892.98px;font-size:29.80px;line-height:29.80px;font-family:'Liberation Sans';color:#111;transform:scaleX(1.0207);-webkit-text-stroke:0.25px #111;">2300</div>
<div class="t" style="left:60.02px;top:954.18px;font-size:29.80px;line-height:29.80px;font-family:'Liberation Sans';color:#111;transform:scaleX(1.0150);-webkit-text-stroke:0.25px #111;">Hannah</div>
<div class="t" style="left:655.24px;top:954.18px;font-size:29.80px;line-height:29.80px;font-family:'Liberation Sans';color:#111;transform:scaleX(1.0207);-webkit-text-stroke:0.25px #111;">4100</div>
<div class="t" style="left:60.35px;top:1015.38px;font-size:29.80px;line-height:29.80px;font-family:'Liberation Sans';color:#111;transform:scaleX(1.0751);-webkit-text-stroke:0.25px #111;">Ian</div>
<div class="t" style="left:655.24px;top:1015.38px;font-size:29.80px;line-height:29.80px;font-family:'Liberation Sans';color:#111;transform:scaleX(1.0207);-webkit-text-stroke:0.25px #111;">1800</div>
<div class="t" style="left:60.24px;top:1076.58px;font-size:29.80px;line-height:29.80px;font-family:'Liberation Sans';color:#111;transform:scaleX(0.9652);-webkit-text-stroke:0.25px #111;">Julia</div>
<div class="t" style="left:655.24px;top:1076.58px;font-size:29.80px;line-height:29.80px;font-family:'Liberation Sans';color:#111;transform:scaleX(1.0207);-webkit-text-stroke:0.25px #111;">2700</div>
<div class="t" style="left:59.30px;top:1137.78px;font-size:29.80px;line-height:29.80px;font-family:'Liberation Sans';color:#111;transform:scaleX(1.0222);-webkit-text-stroke:0.25px #111;">Kevin</div>
<div class="t" style="left:672.15px;top:1137.78px;font-size:29.80px;line-height:29.80px;font-family:'Liberation Sans';color:#111;transform:scaleX(1.0207);-webkit-text-stroke:0.25px #111;">900</div>
<div class="t" style="left:15.75px;top:471.32px;font-size:32.70px;line-height:32.70px;font-family:'Liberation Sans';color:#222;transform:scaleX(0.7024);-webkit-text-stroke:0.2px #222;">1</div>
<div class="t" style="left:16.32px;top:533.13px;font-size:31.98px;line-height:31.98px;font-family:'Liberation Sans';color:#2b7050;transform:scaleX(0.9200);-webkit-text-stroke:0.2px #2b7050;">2</div>
<div class="t" style="left:16.41px;top:594.33px;font-size:31.98px;line-height:31.98px;font-family:'Liberation Sans';color:#2b7050;transform:scaleX(0.9200);-webkit-text-stroke:0.2px #2b7050;">3</div>
<div class="t" style="left:16.41px;top:655.53px;font-size:31.98px;line-height:31.98px;font-family:'Liberation Sans';color:#2b7050;transform:scaleX(0.9200);-webkit-text-stroke:0.2px #2b7050;">4</div>
<div class="t" style="left:16.35px;top:716.73px;font-size:31.98px;line-height:31.98px;font-family:'Liberation Sans';color:#2b7050;transform:scaleX(0.9200);-webkit-text-stroke:0.2px #2b7050;">5</div>
<div class="t" style="left:16.22px;top:777.93px;font-size:31.98px;line-height:31.98px;font-family:'Liberation Sans';color:#2b7050;transform:scaleX(0.9200);-webkit-text-stroke:0.2px #2b7050;">6</div>
<div class="t" style="left:16.31px;top:839.13px;font-size:31.98px;line-height:31.98px;font-family:'Liberation Sans';color:#2b7050;transform:scaleX(0.9200);-webkit-text-stroke:0.2px #2b7050;">7</div>
<div class="t" style="left:16.32px;top:900.33px;font-size:31.98px;line-height:31.98px;font-family:'Liberation Sans';color:#2b7050;transform:scaleX(0.9200);-webkit-text-stroke:0.2px #2b7050;">8</div>
<div class="t" style="left:16.32px;top:961.53px;font-size:31.98px;line-height:31.98px;font-family:'Liberation Sans';color:#2b7050;transform:scaleX(0.9200);-webkit-text-stroke:0.2px #2b7050;">9</div>
<div class="t" style="left:7.60px;top:1022.73px;font-size:31.98px;line-height:31.98px;font-family:'Liberation Sans';color:#2b7050;transform:scaleX(0.9200);-webkit-text-stroke:0.2px #2b7050;">10</div>
<div class="t" style="left:8.83px;top:1083.93px;font-size:31.98px;line-height:31.98px;font-family:'Liberation Sans';color:#2b7050;transform:scaleX(0.9200);-webkit-text-stroke:0.2px #2b7050;">11</div>
<div class="t" style="left:7.76px;top:1145.13px;font-size:31.98px;line-height:31.98px;font-family:'Liberation Sans';color:#2b7050;transform:scaleX(0.9200);-webkit-text-stroke:0.2px #2b7050;">12</div>
<div class="t" style="left:267.22px;top:160.05px;font-size:31.83px;line-height:31.83px;font-family:'Liberation Sans';font-weight:bold;color:#404040;transform:scaleX(0.8343);-webkit-text-stroke:0.2px #404040;">B</div>
<div class="t" style="left:325.99px;top:158.87px;font-size:33.59px;line-height:33.59px;font-family:'Liberation Serif';font-style:italic;color:#404040;transform:scaleX(1.4015);-webkit-text-stroke:0.2px #404040;">I</div>
<div class="t" style="left:378.23px;top:159.89px;font-size:32.23px;line-height:32.23px;font-family:'Liberation Sans';font-weight:bold;color:#404040;transform:scaleX(0.9136);-webkit-text-stroke:0.2px #404040;">U</div>
<div class="t" style="left:941.95px;top:155.98px;font-size:40.54px;line-height:40.54px;font-family:'Liberation Sans';color:#4a4a4a;transform:scaleX(0.7926);-webkit-text-stroke:0.2px #4a4a4a;">$</div>
<div class="t" style="left:1026.64px;top:156.85px;font-size:37.71px;line-height:37.71px;font-family:'Liberation Sans';color:#555;transform:scaleX(0.9303);-webkit-text-stroke:0.2px #555;">%</div>
<div class="t" style="left:1088.43px;top:130.27px;font-size:53.95px;line-height:53.95px;font-family:'Liberation Sans';font-weight:bold;color:#555;transform:scaleX(1.2185);-webkit-text-stroke:0.2px #555;">,</div>
<div class="t" style="left:948.54px;top:212.72px;font-size:18.08px;line-height:18.08px;font-family:'Liberation Sans';color:#606060;transform:scaleX(1.1942);-webkit-text-stroke:0.2px #606060;">.0</div>
<div class="t" style="left:938.14px;top:229.09px;font-size:18.22px;line-height:18.22px;font-family:'Liberation Sans';color:#606060;transform:scaleX(1.1195);-webkit-text-stroke:0.2px #606060;">.00</div>
<div class="t" style="left:996.31px;top:212.72px;font-size:18.08px;line-height:18.08px;font-family:'Liberation Sans';color:#606060;transform:scaleX(1.0272);-webkit-text-stroke:0.2px #606060;">.00</div>
<div class="t" style="left:1005.48px;top:229.09px;font-size:18.22px;line-height:18.22px;font-family:'Liberation Sans';color:#606060;transform:scaleX(1.0992);-webkit-text-stroke:0.2px #606060;">.0</div>
<div class="t" style="left:500.45px;top:332.05px;font-size:37.08px;line-height:37.08px;font-family:'Liberation Serif';font-style:italic;color:#5a5a5a;transform:scaleX(1.3415);-webkit-text-stroke:0.2px #5a5a5a;">f</div>
<div class="t" style="left:514.97px;top:333.49px;font-size:38.34px;line-height:38.34px;font-family:'Liberation Serif';font-style:italic;color:#5a5a5a;transform:scaleX(1.0165);-webkit-text-stroke:0.2px #5a5a5a;">x</div>
<div class="a" style="left:131px;top:13px;width:127px;height:73.5px;border:4.6px solid #ff0000;box-shadow:3px 4px 6px rgba(0,0,0,0.35), inset 3px 3px 5px rgba(0,0,0,0.22);"></div>
<div class="a" style="left:1135px;top:90px;width:397px;height:68px;border:4.6px solid #ff0000;box-shadow:3px 4px 6px rgba(0,0,0,0.35), inset 4px 4px 6px rgba(0,0,0,0.22);"></div>
<div class="a" style="left:383.2px;top:501.6px;width:345.1px;height:674px;border:4.7px solid #ff0000;box-shadow:3px 3px 6px rgba(0,0,0,0.3), inset 4px 4px 6px rgba(0,0,0,0.25);"></div>
<svg width="1536" height="400" style="filter:drop-shadow(3px 3px 3px rgba(0,0,0,0.35))"><line x1="204" y1="226" x2="197.2" y2="112" stroke="#ff0000" stroke-width="3.4"/><polygon points="195.6,91.5 188.5,117 205.5,116" fill="#ff0000"/></svg>
<div class="a" style="left:175.7px;top:233.5px;width:64.6px;height:64.6px;border-radius:50%;background:#8b0000;"></div>
<div class="t" style="left:196.03px;top:246.04px;font-size:38.11px;line-height:38.11px;font-family:'Liberation Sans';color:#fff;transform:scaleX(1.0358);-webkit-text-stroke:0px #fff;">2</div>
<div class="a" style="left:1066.0px;top:93.2px;width:65.0px;height:65.0px;border-radius:50%;background:#8b0000;"></div>
<div class="t" style="left:1086.86px;top:105.34px;font-size:38.14px;line-height:38.14px;font-family:'Liberation Sans';color:#fff;transform:scaleX(0.9958);-webkit-text-stroke:0px #fff;">3</div>
<div class="a" style="left:780.5px;top:725.2px;width:65.6px;height:65.6px;border-radius:50%;background:#8b0000;"></div>
<div class="a" style="left:810px;top:743.4px;width:4.899999999999977px;height:26.800000000000068px;background:#fff;"></div>
<div class="a" style="left:805.7px;top:745.6px;width:4.7999999999999545px;height:2.3999999999999773px;background:#fff;border-radius:1px 0 0 1px;"></div>
</body></html>
